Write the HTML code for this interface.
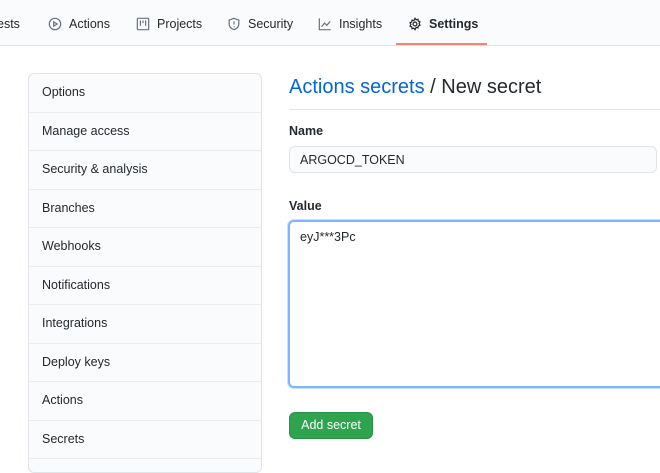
<!DOCTYPE html>
<html><head><style>
*{box-sizing:border-box;margin:0;padding:0}
body{width:660px;height:457px;overflow:hidden;background:#fff;font-family:"Liberation Sans",sans-serif;color:#24292e;position:relative}
.hdr{position:absolute;left:0;top:0;width:660px;height:46px;background:#fafbfc;border-bottom:1px solid #e1e4e8}
.tab{position:absolute;top:17px;font-size:12.5px;color:#24292e;display:flex;align-items:center;gap:7px}
.tab svg{width:14px;height:14px;stroke:#6a737d;fill:none;stroke-width:1.4}
.ul{position:absolute;left:396px;top:43px;width:91px;height:2px;background:#f9826c}
.side{position:absolute;left:28px;top:73px;width:234px;height:400px;border:1px solid #e1e4e8;border-radius:6px;background:#fafbfc}
.side div{height:38.5px;line-height:37px;padding-left:13px;font-size:12.5px;border-bottom:1px solid #e9ecef;color:#24292e}
h1{position:absolute;left:289px;top:76px;font-size:20px;font-weight:normal;color:#24292e}
h1 a{color:#0366d6}
.hr{position:absolute;left:289px;top:109px;width:371px;height:1px;background:#e1e4e8}
.lbl{position:absolute;left:289px;font-size:12.5px;font-weight:bold}
.inp{position:absolute;left:289px;top:146px;width:368px;height:27px;border:1px solid #e1e4e8;border-radius:6px;background:#fafbfc;font-size:12.5px;padding:6px 10px}
.ta{position:absolute;left:288px;top:220px;width:380px;height:168px;border:2px solid #79b8ff;border-radius:6px;background:#fff;font-size:12.5px;padding:8px 10px;box-shadow:0 0 0 1px #c8e1ff}
.btn{position:absolute;left:289px;top:412px;width:84px;height:27px;background:#2ea44f;border:1px solid #2a9147;border-radius:6px;color:#fff;font-size:12.5px;text-align:center;line-height:25px}
</style></head><body>
<div class="hdr">
<div class="tab" style="left:-3px">ests</div>
<div class="tab" style="left:48px"><svg viewBox="0 0 16 16"><circle cx="8" cy="8" r="6.5"/><path d="M6.5 5.5v5l4-2.5z"/></svg>Actions</div>
<div class="tab" style="left:136px"><svg viewBox="0 0 16 16"><rect x="1.5" y="1.5" width="13" height="13" rx="1"/><path d="M5 4v6M8 4v3M11 4v6"/></svg>Projects</div>
<div class="tab" style="left:227px"><svg viewBox="0 0 16 16"><path d="M8 1.5l5.5 2v4.5c0 3.5-2.5 5.5-5.5 6.5C5 13.5 2.5 11.5 2.5 8V3.5z"/><path d="M8 5v3.5M8 10.5v1"/></svg>Security</div>
<div class="tab" style="left:318px"><svg viewBox="0 0 16 16"><path d="M1.5 1.5v13h13M4 11l3.5-4 2.5 2.5 4-4.5"/></svg>Insights</div>
<div class="tab" style="left:408px;font-weight:bold"><svg viewBox="0 0 16 16" style="stroke:#24292e"><circle cx="8" cy="8" r="2.2"/><path d="M8 1.5l1.3 1.7 2.1-.6.3 2.1 2 .9-1 1.9 1 1.9-2 .9-.3 2.1-2.1-.6L8 14.5l-1.3-1.7-2.1.6-.3-2.1-2-.9 1-1.9-1-1.9 2-.9.3-2.1 2.1.6z"/></svg>Settings</div>
<div class="ul"></div>
</div>
<div class="side">
<div>Options</div><div>Manage access</div><div>Security &amp; analysis</div><div>Branches</div><div>Webhooks</div><div>Notifications</div><div>Integrations</div><div>Deploy keys</div><div>Actions</div><div>Secrets</div>
</div>
<h1><a>Actions secrets</a> / New secret</h1>
<div class="hr"></div>
<div class="lbl" style="top:124px">Name</div>
<div class="inp">ARGOCD_TOKEN</div>
<div class="lbl" style="top:199px">Value</div>
<div class="ta">eyJ***3Pc</div>
<div class="btn">Add secret</div>
</body></html>
